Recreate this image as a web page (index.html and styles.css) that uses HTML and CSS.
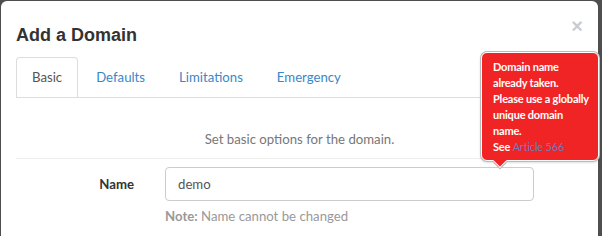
FILE: index.html
```html
<!DOCTYPE html>
<html>
<head>
<meta charset="utf-8">
<link rel="stylesheet" href="styles.css">
</head>
<body>
<div class="modal">
  <div class="modal-header">
    <h4 class="modal-title">Add a Domain</h4>
    <span class="close">&times;</span>
  </div>
  <div class="modal-body">
    <ul class="tabs">
      <li class="tab active"><a>Basic</a></li>
      <li class="tab"><a>Defaults</a></li>
      <li class="tab"><a>Limitations</a></li>
      <li class="tab"><a>Emergency</a></li>
    </ul>
    <div class="tab-content">
      <p class="lead">Set basic options for the domain.</p>
      <hr class="divider">
      <div class="form-row">
        <label class="label">Name</label>
        <div class="field">
          <input class="input" type="text" value="demo">
          <p class="help"><b>Note:</b> Name cannot be changed</p>
        </div>
      </div>
    </div>
    <div class="tooltip">
      Domain name<br>
      already taken.<br>
      Please use a globally<br>
      unique domain<br>
      name.<br>
      See <a class="tip-link">Article 566</a>
      <span class="arrow"></span>
    </div>
  </div>
</div>
</body>
</html>
```

FILE: styles.css
```css
html, body {
  margin: 0;
  padding: 0;
  height: 100%;
  overflow: hidden;
  background: #4e4e4e;
}

.modal {
  position: relative;
  margin: 1px 4px 0 1px;
  width: 597px;
  min-height: 300px;
  background: #fff;
  border-radius: 6px 6px 0 0;
  font-family: Lato, "Open Sans", sans-serif;
  font-size: 13.2px;
  color: #333;
}

.modal-header {
  display: flex;
  justify-content: space-between;
  align-items: flex-start;
  padding: 24px 15px 0 15px;
}

.modal-title {
  margin: 0;
  font-family: "Liberation Sans", Arial, sans-serif;
  font-weight: bold;
  font-size: 18px;
  line-height: 20px;
  color: #333;
}

.close {
  margin-top: -9px;
  font-family: "Liberation Sans", Arial, sans-serif;
  font-size: 20px;
  font-weight: bold;
  line-height: 1;
  color: #000;
  opacity: 0.2;
}

.modal-body {
  padding: 12px 15px 0 15px;
}

.tabs {
  display: flex;
  margin: 0;
  padding: 0;
  list-style: none;
  border-bottom: 1px solid #ddd;
}

.tab {
  margin-right: 2px;
}

.tab a {
  display: block;
  padding: 10px 15px;
  line-height: 19px;
  border: 1px solid transparent;
  border-bottom: none;
  border-radius: 4px 4px 0 0;
  color: #3a87c8;
}

.tab.active a {
  color: #555;
  border-color: #ddd;
}

.lead {
  margin: 31px 0 0 0;
  line-height: 20px;
  text-align: center;
  color: #777;
}

.divider {
  margin: 9px 0 0 0;
  border: 0;
  border-top: 1px solid #eee;
}

.form-row {
  display: flex;
  margin-top: 8px;
}

.label {
  width: 118px;
  padding-right: 31px;
  text-align: right;
  font-weight: bold;
  line-height: 34px;
  color: #333;
}

.field {
  display: flex;
  flex-direction: column;
}

.input {
  box-sizing: border-box;
  width: 369px;
  height: 34px;
  padding: 6px 12px;
  margin: 0;
  border: 1px solid #ccc;
  border-radius: 4px;
  font-family: Lato, "Open Sans", sans-serif;
  font-size: 13.2px;
  color: #555;
  outline: none;
}

.help {
  margin: 5px 0 0 0;
  line-height: 20px;
  color: #999;
}

.tooltip {
  position: absolute;
  left: 480px;
  top: 51px;
  width: 94px;
  padding: 6px 11px 5px 11px;
  background: #f02424;
  border: 1px solid #fff;
  box-shadow: 0 0 0 1px #bbb, 0 1px 3px rgba(0,0,0,0.25);
  border-radius: 6px;
  color: #fff;
  font-size: 11px;
  font-weight: bold;
  letter-spacing: -0.2px;
  line-height: 16px;
  white-space: nowrap;
}

.tip-link {
  color: #6f7cb4;
  font-weight: normal;
}

.arrow {
  position: absolute;
  left: 13px;
  bottom: -6px;
  width: 9px;
  height: 9px;
  background: #f02424;
  border-right: 1px solid #fff;
  border-bottom: 1px solid #fff;
  box-shadow: 1px 1px 0 0 #bbb;
  transform: rotate(45deg);
}
```
